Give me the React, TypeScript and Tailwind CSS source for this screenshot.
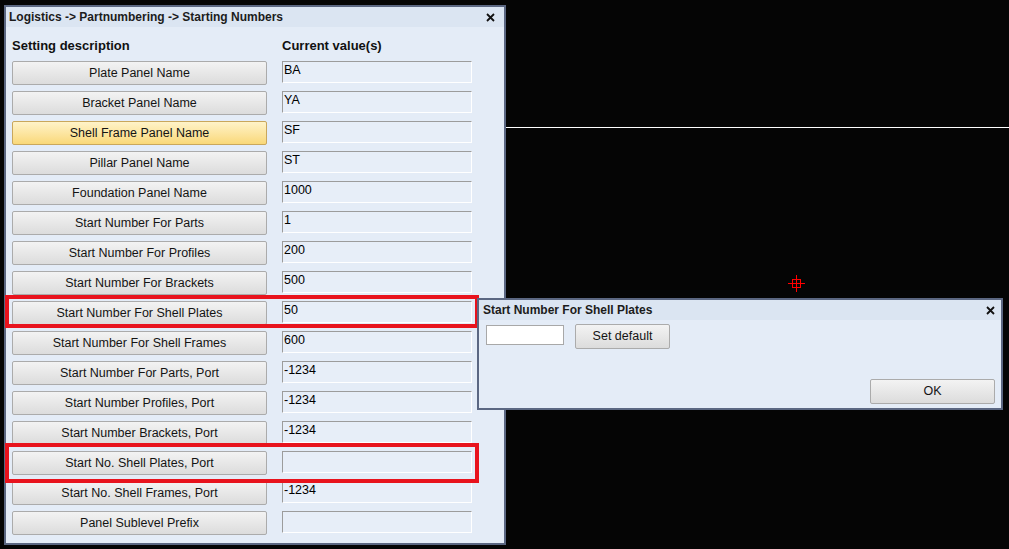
const rows: { label: string; value: string; active?: boolean }[] = [
  { label: "Plate Panel Name", value: "BA" },
  { label: "Bracket Panel Name", value: "YA" },
  { label: "Shell Frame Panel Name", value: "SF", active: true },
  { label: "Pillar Panel Name", value: "ST" },
  { label: "Foundation Panel Name", value: "1000" },
  { label: "Start Number For Parts", value: "1" },
  { label: "Start Number For Profiles", value: "200" },
  { label: "Start Number For Brackets", value: "500" },
  { label: "Start Number For Shell Plates", value: "50" },
  { label: "Start Number For Shell Frames", value: "600" },
  { label: "Start Number For Parts, Port", value: "-1234" },
  { label: "Start Number Profiles, Port", value: "-1234" },
  { label: "Start Number Brackets, Port", value: "-1234" },
  { label: "Start No. Shell Plates, Port", value: "" },
  { label: "Start No. Shell Frames, Port", value: "-1234" },
  { label: "Panel Sublevel Prefix", value: "" },
];

const btn =
  "flex items-center justify-center rounded-[2px] border text-[12.5px] text-[#141414] border-[#ababab] bg-gradient-to-b from-[#f3f3f3] to-[#dcdcdc]";

function CloseX() {
  return (
    <svg width="9" height="9" viewBox="0 0 9 9" className="block">
      <path d="M1 1L8 8M8 1L1 8" stroke="#111" strokeWidth="1.8" />
    </svg>
  );
}

export default function App() {
  return (
    <div
      className="relative h-[549px] w-[1009px] overflow-hidden bg-[#050505]"
      style={{ fontFamily: '"Liberation Sans", Arial, sans-serif' }}
    >
      {/* canvas line + crosshair */}
      <div className="absolute left-[506px] top-[127px] h-px w-[503px] bg-white" />
      <div className="absolute left-[788px] top-[275px] h-[17px] w-[17px]">
        <div className="absolute left-[8px] top-0 h-[17px] w-px bg-[#ff0000]" />
        <div className="absolute left-0 top-[8px] h-px w-[17px] bg-[#ff0000]" />
        <div className="absolute left-[4px] top-[4px] h-[9px] w-[9px] border border-[#ff0000]" />
      </div>

      {/* main dialog */}
      <div className="absolute left-[4px] top-[5px] flex h-[540px] w-[502px] flex-col border-2 border-[#5b6782] bg-[#e4ecf7]">
        <div className="flex h-[20px] items-center justify-between bg-[#dbe5f2] pl-[3px] pr-[9px]">
          <span className="text-[12px] font-bold text-[#1c1c1c]">
            Logistics -&gt; Partnumbering -&gt; Starting Numbers
          </span>
          <CloseX />
        </div>
        <div className="flex flex-col px-[6px] pt-[11px]">
          <div className="flex h-[16px] items-center text-[13px] font-bold text-[#111]">
            <span className="w-[270px]">Setting description</span>
            <span>Current value(s)</span>
          </div>
          <div className="mt-[7px] flex flex-col gap-[6px]">
            {rows.map((r) => (
              <div key={r.label} className="flex h-[24px] items-start gap-[15px]">
                <div
                  className={
                    r.active
                      ? "flex h-[24px] w-[255px] items-center justify-center rounded-[2px] border border-[#c9a75c] bg-gradient-to-b from-[#fff3c8] to-[#f9d878] text-[12.5px] text-[#141414]"
                      : btn + " h-[24px] w-[255px]"
                  }
                >
                  {r.label}
                </div>
                <div className="h-[22px] w-[190px] border border-b-white border-l-[#9c9c9c] border-r-white border-t-[#9c9c9c] bg-[#e7eef8] px-[1px] text-[12.5px] leading-[16px] text-black">
                  {r.value}
                </div>
              </div>
            ))}
          </div>
        </div>
      </div>

      {/* highlight boxes */}
      <div className="absolute left-[5px] top-[295px] h-[33px] w-[474px] border-4 border-[#e8131d]" />
      <div className="absolute left-[5px] top-[443px] h-[40px] w-[474px] border-4 border-[#e8131d]" />

      {/* secondary dialog */}
      <div className="absolute left-[477px] top-[298px] flex h-[112px] w-[526px] flex-col border-2 border-[#5b6782] bg-[#e4ecf7]">
        <div className="flex h-[20px] items-center justify-between bg-[#dbe5f2] pl-[4px] pr-[6px]">
          <span className="text-[12px] font-bold text-[#1c1c1c]">Start Number For Shell Plates</span>
          <CloseX />
        </div>
        <div className="flex items-start gap-[11px] pl-[7px] pt-[4px]">
          <div className="mt-px h-[20px] w-[78px] border border-[#a8a8a8] bg-white" />
          <div className={btn + " h-[25px] w-[95px]"}>Set default</div>
        </div>
        <div className="flex justify-end pr-[6px] pt-[30px]">
          <div className={btn + " h-[25px] w-[125px]"}>OK</div>
        </div>
      </div>
    </div>
  );
}
